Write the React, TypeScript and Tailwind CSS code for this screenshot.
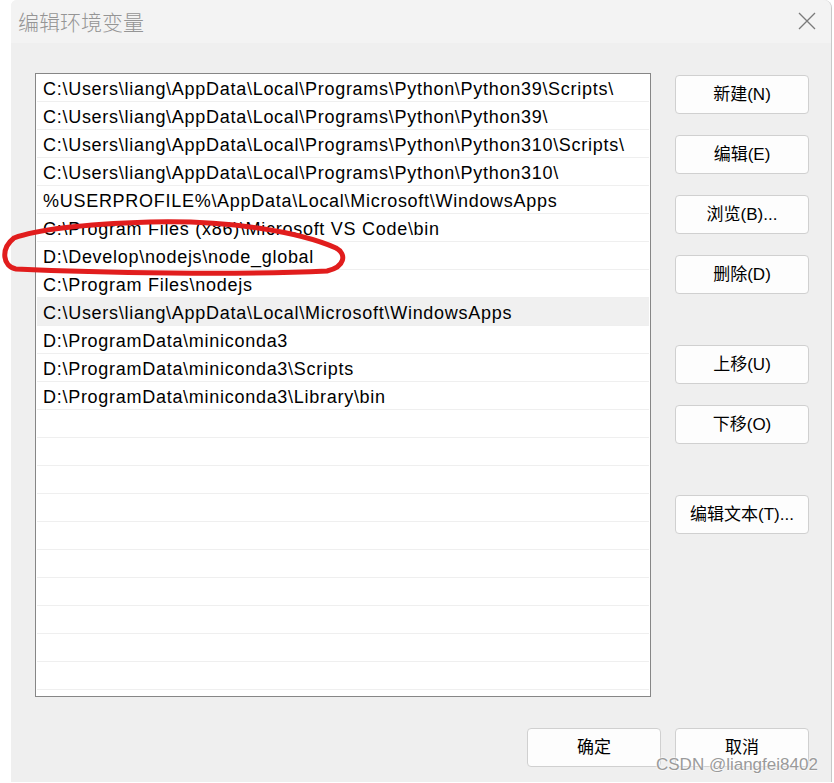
const paths = [
  "C:\\Users\\liang\\AppData\\Local\\Programs\\Python\\Python39\\Scripts\\",
  "C:\\Users\\liang\\AppData\\Local\\Programs\\Python\\Python39\\",
  "C:\\Users\\liang\\AppData\\Local\\Programs\\Python\\Python310\\Scripts\\",
  "C:\\Users\\liang\\AppData\\Local\\Programs\\Python\\Python310\\",
  "%USERPROFILE%\\AppData\\Local\\Microsoft\\WindowsApps",
  "C:\\Program Files (x86)\\Microsoft VS Code\\bin",
  "D:\\Develop\\nodejs\\node_global",
  "C:\\Program Files\\nodejs",
  "C:\\Users\\liang\\AppData\\Local\\Microsoft\\WindowsApps",
  "D:\\ProgramData\\miniconda3",
  "D:\\ProgramData\\miniconda3\\Scripts",
  "D:\\ProgramData\\miniconda3\\Library\\bin",
];

const rows = [...paths, ...Array(22 - paths.length).fill("")];

function Btn({ label, className = "" }: { label: string; className?: string }) {
  return (
    <button
      className={`h-[39px] w-[134px] rounded-[4px] border border-[#d0d0d0] bg-[#fdfdfd] text-[17px] text-black ${className}`}
      style={{ fontFamily: '"Liberation Sans", "Noto Sans CJK SC", sans-serif' }}
    >
      {label}
    </button>
  );
}

export default function App() {
  return (
    <div className="relative h-[783px] w-[834px] overflow-hidden bg-white">
      <div className="ml-[11px] flex h-[782px] w-[821px] flex-col rounded-tl-[6px] rounded-tr-[8px] border-r border-[#c8c8c8] bg-[#efefef]">
        {/* title bar */}
        <div className="flex h-[43px] items-center justify-between rounded-tl-[6px] rounded-tr-[8px] bg-[#f3f3f3] pl-[7px] pr-[15px]">
          <span
            className="text-[21px] font-light text-[#959595]"
            style={{ fontFamily: '"Noto Sans CJK SC", sans-serif' }}
          >
            编辑环境变量
          </span>
          <svg width="18" height="18" viewBox="0 0 18 18" className="mt-[-1px]">
            <path d="M1 1 L17 17 M17 1 L1 17" stroke="#7a7a7a" strokeWidth="1.3" fill="none" />
          </svg>
        </div>

        {/* body */}
        <div className="flex flex-col pl-[24px] pr-[22px] pt-[30px]">
          <div className="flex gap-[24px]">
            <div className="h-[624px] w-[616px] border border-[#868686] bg-white pl-[1px] pr-[1px]">
              {rows.map((p, i) => (
                <div
                  key={i}
                  className={`flex h-[28px] items-center border-b border-[#efefef] pl-[6px] pt-[3px] text-[18px] tracking-[0.72px] text-black ${
                    i === 8 ? "bg-[#f0f0f0]" : ""
                  }`}
                  style={{ fontFamily: '"Liberation Sans", "Noto Sans CJK SC", sans-serif' }}
                >
                  {p}
                </div>
              ))}
            </div>

            <div className="flex flex-col pt-[2px]">
              <Btn label="新建(N)" />
              <Btn label="编辑(E)" className="mt-[21px]" />
              <Btn label="浏览(B)..." className="mt-[21px]" />
              <Btn label="删除(D)" className="mt-[21px]" />
              <Btn label="上移(U)" className="mt-[51px]" />
              <Btn label="下移(O)" className="mt-[21px]" />
              <Btn label="编辑文本(T)..." className="mt-[51px]" />
            </div>
          </div>

          <div className="mt-[31px] flex justify-end gap-[14px]">
            <Btn label="确定" />
            <Btn label="取消" />
          </div>
        </div>
      </div>

      {/* red hand-drawn annotation */}
      <svg className="pointer-events-none absolute left-0 top-0" width="834" height="783">
        <path
          d="M150 222 C 230 220, 300 232, 336 248 C 347 254, 345 267, 327 271 C 240 275, 100 273, 16 269 C 3 267, 0 249, 14 238 C 40 228, 90 224, 150 222"
          stroke="#e11d1d"
          strokeWidth="5"
          fill="none"
          strokeLinecap="round"
        />
      </svg>

      {/* watermark */}
      <span
        className="pointer-events-none absolute left-[656px] top-[752px] text-[17px] text-[#9a9a9a]"
        style={{
          fontFamily: '"Liberation Sans", sans-serif',
          textShadow: "0 0 2px #fff, 0 0 2px #fff",
        }}
      >
        CSDN @liangfei8402
      </span>
    </div>
  );
}
